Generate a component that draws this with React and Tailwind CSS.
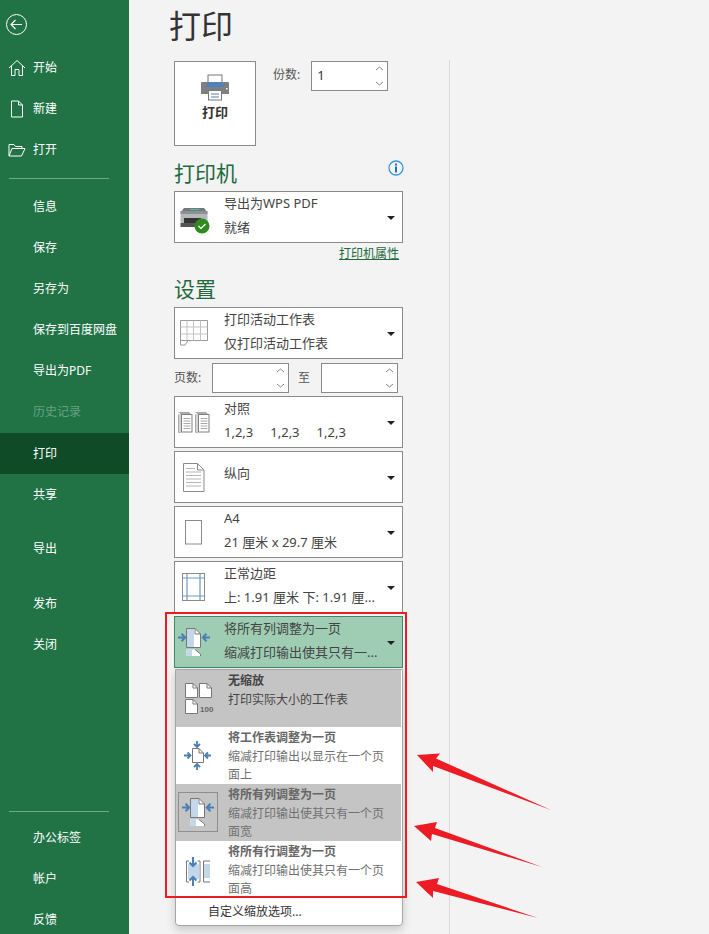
const FONT = "font-['Noto_Sans','Noto_Sans_CJK_SC',sans-serif]";

function SideItem({ children, icon, active, disabled, className = "" }) {
  return (
    <div
      className={`flex h-[41px] shrink-0 items-center text-[12px] ${
        active ? "bg-[#0e4b26] text-white" : disabled ? "text-[#66a182]" : "text-white"
      } ${className}`}
    >
      <span className="flex w-[33px] shrink-0 justify-center pl-[1px]">{icon}</span>
      <span>{children}</span>
    </div>
  );
}

function Caret() {
  return <span className="block h-0 w-0 border-x-[4px] border-t-[4px] border-x-transparent border-t-[#222]" />;
}

function Spinner() {
  return (
    <svg width="9" height="22" viewBox="0 0 9 22" fill="none" stroke="#777" strokeWidth="0.9">
      <path d="M1 5 L4.5 2 L8 5" />
      <path d="M1 17 L4.5 20 L8 17" />
    </svg>
  );
}

function Dropdown({ icon, line1, line2, selected, single }) {
  return (
    <div
      className={`flex h-[52px] w-[229px] shrink-0 border ${
        selected ? "border-[#3f8a60] bg-[#9fcdb3]" : "border-[#8a8a8a] bg-white"
      }`}
    >
      <div className="flex w-[49px] shrink-0 items-center pl-[2px]">{icon}</div>
      <div className={`min-w-0 flex-1 -mt-px text-[13px] leading-6 text-[#444] ${single ? "pt-[10px]" : ""}`}>
        <div className="whitespace-nowrap">{line1}</div>
        {line2 && <div className="whitespace-nowrap">{line2}</div>}
      </div>
      <div className="flex w-[15px] shrink-0 justify-start pt-[24px]">
        <Caret />
      </div>
    </div>
  );
}

const Svg34 = ({ children }) => (
  <svg width="34" height="34" viewBox="0 0 34 34" fill="none">{children}</svg>
);

const FitColPages = () => (
  <>
    <path d="M9.5 3.5 H18 L23.5 9 V22.5 H9.5 Z" fill="#fff" stroke="#777" />
    <path d="M10 4 H17 V22 H10 Z" fill="#c3d7ea" />
    <path d="M18 3.5 V9 H23.5" stroke="#777" />
    <path d="M9.5 24.5 H18 L23.5 29 V31 H9.5 Z" fill="#fff" />
    <path d="M9.5 24.5 H15 V31 H9.5 Z" fill="#c3d7ea" />
    <path d="M18 24.5 L23.5 29 V31" stroke="#777" />
    <path d="M1 12.5 H8 M4.5 8.8 L8.2 12.5 L4.5 16.2" stroke="#4a7fb5" strokeWidth="2" />
    <path d="M33 12.5 H26 M29.5 8.8 L25.8 12.5 L29.5 16.2" stroke="#4a7fb5" strokeWidth="2" />
  </>
);

const PrinterStatusIcon = () => (
  <Svg34>
    <path d="M7 8 H27 L30 12 H4 Z" fill="#6f7a7a" />
    <rect x="3.5" y="11" width="27" height="12" rx="1" fill="#b4b8b8" />
    <rect x="3.5" y="11" width="27" height="3" fill="#8b9090" />
    <rect x="13" y="9" width="9" height="1" fill="#49c0a8" />
    <rect x="7" y="18" width="17" height="7" fill="#333" />
    <rect x="3.5" y="23" width="20" height="4" fill="#555" />
    <circle cx="25" cy="26" r="7.5" fill="#2e8b1f" />
    <path d="M21.5 26 L24 28.5 L28.5 24" stroke="#fff" strokeWidth="1.2" />
  </Svg34>
);

const SheetIcon = () => (
  <Svg34>
    <path d="M3.5 4.5 H30.5 V24.5 H11 L8 29 H3.5 Z" fill="#fff" stroke="#9a9a9a" />
    <path d="M3.5 11 H30.5 M3.5 18 H30.5 M10 4.5 V24.5 M16.5 4.5 V24.5 M23.5 4.5 V24.5" stroke="#c3c3c3" />
    <path d="M3.5 24.5 H11" stroke="#9a9a9a" />
  </Svg34>
);

const CollateIcon = () => (
  <Svg34>
    {[1.5, 18.5].map((x) => (
      <g key={x}>
        <path d={`M${x} 9.5 V27.5 H${x + 2} M${x} 7.5 H${x + 11}`} stroke="#aaa" />
        <path d={`M${x + 1.5} 9 V27.5 M${x + 1.5} 8.5 H${x + 12}`} stroke="#aaa" />
        <rect x={x + 3} y={9.5} width="10.5" height="17.5" fill="#fff" stroke="#808080" />
        <path d={`M${x + 5} 13.5 H${x + 12} M${x + 5} 16 H${x + 12} M${x + 5} 18.5 H${x + 12} M${x + 5} 21 H${x + 12} M${x + 5} 23.5 H${x + 12}`} stroke="#aaa" />
      </g>
    ))}
  </Svg34>
);

const PortraitIcon = () => (
  <Svg34>
    <path d="M6.5 3.5 H20.5 L27 10 V31.5 H6.5 Z" fill="#fff" stroke="#8a8a8a" />
    <path d="M20.5 3.5 V10 H27" stroke="#8a8a8a" />
    <path d="M9 8.5 H18 M9 12 H24 M9 15.5 H24 M9 19 H24 M9 22.5 H24 M9 26 H24" stroke="#b5b5b5" />
  </Svg34>
);

const A4Icon = () => (
  <Svg34>
    <rect x="8.5" y="5.5" width="16" height="23.5" fill="#fff" stroke="#8a8a8a" />
  </Svg34>
);

const MarginIcon = () => (
  <Svg34>
    <rect x="5.5" y="3.5" width="22" height="27" fill="#fff" stroke="#8a8a8a" />
    <path d="M10 3.5 V30.5 M23 3.5 V30.5 M5.5 8 H27.5 M5.5 26 H27.5" stroke="#6f9ac4" strokeWidth="1.2" />
  </Svg34>
);

const FitColIcon = () => <Svg34><FitColPages /></Svg34>;

const MiniPage = ({ x, y }) => (
  <>
    <path d={`M${x + 0.5} ${y + 0.5} H${x + 8} L${x + 12.5} ${y + 5} V${y + 14.5} H${x + 0.5} Z`} fill="#fff" stroke="#777" />
    <path d={`M${x + 8} ${y + 0.5} V${y + 5} H${x + 12.5}`} stroke="#777" />
  </>
);

const NoScaleIcon = () => (
  <svg width="40" height="40" viewBox="0 0 40 40" fill="none">
    <MiniPage x={7} y={5} />
    <MiniPage x={21} y={5} />
    <MiniPage x={7} y={21} />
    <text x="22" y="34" fontSize="8" fontWeight="700" fill="#666" fontFamily="Liberation Sans, sans-serif">100</text>
  </svg>
);

const FitSheetIcon = () => (
  <svg width="40" height="40" viewBox="0 0 40 40" fill="none">
    <path d="M14.5 13.5 H21 L25.5 18 V27.5 H14.5 Z" fill="#fff" stroke="#777" />
    <path d="M21 13.5 V18 H25.5" stroke="#777" />
    <g stroke="#4a7fb5" strokeWidth="1.8">
      <path d="M6 20.5 H12.5 M9.5 17.5 L12.5 20.5 L9.5 23.5" />
      <path d="M33 20.5 H27 M30 17.5 L27 20.5 L30 23.5" />
      <path d="M19 6 V12 M16 9 L19 12 L22 9" />
      <path d="M19 35 V29 M16 32 L19 29 L22 32" />
    </g>
  </svg>
);

const FitColFlyIcon = () => (
  <div className="flex h-[40px] w-[40px] items-center justify-center border border-[#8e8e8e]">
    <Svg34><FitColPages /></Svg34>
  </div>
);

const FitRowIcon = () => (
  <svg width="40" height="40" viewBox="0 0 40 40" fill="none">
    <path d="M8.5 12 V33 M22 12 V33 M8.5 12 H11 M8.5 33 H11 M19.5 12 H22 M19.5 33 H22" stroke="#777" />
    <path d="M10 15 H20 L21.5 17 V30 H10 Z" fill="#c3d7ea" />
    <path d="M32 12 H25.5 V33 H32" fill="#fff" stroke="#777" />
    <path d="M26 15 H32 V29 H26 Z" fill="#c3d7ea" />
    <g stroke="#4a7fb5" strokeWidth="2">
      <path d="M15 8 V17 M11.5 13.5 L15 17 L18.5 13.5" />
      <path d="M15 37 V28 M11.5 31.5 L15 28 L18.5 31.5" />
    </g>
  </svg>
);

function FlyItem({ icon, title, desc, active, strong }) {
  return (
    <div className={`flex h-[57px] w-[225px] shrink-0 ${active ? "bg-[#c4c4c4]" : "bg-white"}`}>
      <div className="w-[52px] shrink-0 pl-[2px] pt-[8px]">{icon}</div>
      <div className={`min-w-0 flex-1 text-[12px] ${strong ? "text-[#444]" : "text-[#666]"}`}>
        <div className="h-[21px] pt-px font-bold leading-[20px]">{title}</div>
        <div className={`w-[160px] leading-[18px] ${strong ? "text-[#444]" : "text-[#707070]"}`}>{desc}</div>
      </div>
    </div>
  );
}

const HomeIcon = (
  <svg width="18" height="18" viewBox="0 0 18 18" fill="none" stroke="#fff">
    <path d="M1 9 L9 1.5 L17 9 M3.5 7 V16.5 H7 V10.5 H11 V16.5 H14.5 V7" />
  </svg>
);
const DocIcon = (
  <svg width="14" height="18" viewBox="0 0 14 18" fill="none" stroke="#fff">
    <path d="M1.5 1 H8.5 L12.5 5 V17 H1.5 Z M8.5 1 V5 H12.5" />
  </svg>
);
const FolderIcon = (
  <svg width="18" height="14" viewBox="0 0 18 14" fill="none" stroke="#fff">
    <path d="M1 13 V1.5 H6 L7.5 3.5 H14 V5.5 M1 13 L4 5.5 H17 L13.5 13 Z" />
  </svg>
);

export default function App() {
  return (
    <div className={`relative flex h-[934px] w-[709px] overflow-hidden bg-[#f3f3f3] ${FONT}`}>
      {/* Sidebar */}
      <aside className="flex h-[934px] w-[129px] shrink-0 flex-col bg-[#217346]">
        <div className="flex h-[47px] shrink-0 items-start pl-[6px] pt-[14px]">
          <svg width="21" height="21" viewBox="0 0 21 21" fill="none" stroke="#fff">
            <circle cx="10.5" cy="10.5" r="10" />
            <path d="M16 10.5 H5 M9.5 6 L5 10.5 L9.5 15" strokeWidth="1.1" />
          </svg>
        </div>
        <SideItem icon={HomeIcon}>开始</SideItem>
        <SideItem icon={DocIcon}>新建</SideItem>
        <SideItem icon={FolderIcon}>打开</SideItem>
        <div className="flex h-[16px] shrink-0 items-center pl-[9px]">
          <div className="h-px w-[100px] bg-[#6fa886]" />
        </div>
        <SideItem>信息</SideItem>
        <SideItem>保存</SideItem>
        <SideItem>另存为</SideItem>
        <SideItem>保存到百度网盘</SideItem>
        <SideItem>导出为PDF</SideItem>
        <SideItem disabled>历史记录</SideItem>
        <SideItem active className="mt-px">打印</SideItem>
        <SideItem>共享</SideItem>
        <SideItem className="mt-[13px]">导出</SideItem>
        <SideItem className="mt-[14px]">发布</SideItem>
        <SideItem>关闭</SideItem>
        <div className="ml-[9px] mt-[146px] h-px w-[100px] shrink-0 bg-[#6fa886]" />
        <SideItem className="mt-[5px]">办公标签</SideItem>
        <SideItem>帐户</SideItem>
        <SideItem>反馈</SideItem>
      </aside>

      {/* Print column */}
      <main className="ml-[45px] flex w-[229px] shrink-0 flex-col">
        <div className="-ml-[5px] h-[61px] shrink-0 text-[32px] leading-[51px] text-[#333]">打印</div>

        <div className="flex h-[85px] shrink-0">
          <div className="flex h-[85px] w-[82px] shrink-0 flex-col items-center border border-[#8a8a8a] bg-white pt-[12px]">
            <svg width="30" height="27" viewBox="0 0 30 27" fill="none">
              <path d="M2 8 H28 Q29 8 29 9 V20 H1 V9 Q1 8 2 8" fill="#7f7f7f" />
              <rect x="8" y="1" width="14" height="9" fill="#fff" stroke="#777" />
              <rect x="8" y="8" width="14" height="3" fill="#4f81bd" />
              <rect x="6" y="10" width="18" height="3" fill="#4f81bd" />
              <rect x="26" y="14" width="1.5" height="1.5" fill="#fff" />
              <rect x="8.5" y="16.5" width="13" height="9.5" fill="#fff" stroke="#777" />
              <path d="M11 20 H19 M11 23 H19" stroke="#4f81bd" />
            </svg>
            <span className="mt-[2px] text-[13px] font-bold leading-[18px] text-[#333]">打印</span>
          </div>
          <span className="ml-[17px] mt-[5px] text-[12px] leading-[18px] text-[#555]">份数:</span>
          <div className="ml-[11px] flex h-[30px] w-[77px] items-center justify-between border border-[#8a8a8a] bg-white pl-[5px] pr-[3px] text-[13px] text-[#333]">
            <span>1</span>
            <Spinner />
          </div>
        </div>

        <div className="mt-[10px] flex h-[35px] shrink-0 items-center justify-between">
          <span className="text-[21px] leading-none text-[#1f6b3e]">打印机</span>
          <svg className="mr-[-1px] mb-[11px]" width="16" height="16" viewBox="0 0 16 16" fill="none">
            <circle cx="8" cy="8" r="7" stroke="#3a96dd" strokeWidth="1.3" />
            <rect x="7" y="3.5" width="2" height="2" fill="#1b6fb5" />
            <rect x="7" y="6.5" width="2" height="6" fill="#1b6fb5" />
          </svg>
        </div>
        <Dropdown icon={<PrinterStatusIcon />} line1="导出为WPS PDF" line2="就绪" />
        <div className="flex h-[22px] shrink-0 items-center justify-end pr-[4px] text-[12px] text-[#1f6b3e] underline">
          打印机属性
        </div>

        <div className="mt-[8px] flex h-[34px] shrink-0 items-center pb-[2px] text-[21px] leading-none text-[#1f6b3e]">设置</div>
        <Dropdown icon={<SheetIcon />} line1="打印活动工作表" line2="仅打印活动工作表" />

        <div className="mt-[4px] flex h-[30px] shrink-0 items-center">
          <span className="w-[38px] shrink-0 text-[12px] text-[#555]">页数:</span>
          <div className="flex h-[30px] w-[77px] shrink-0 items-center justify-end border border-[#8a8a8a] bg-white pr-[3px]">
            <Spinner />
          </div>
          <span className="ml-[9px] w-[23px] shrink-0 text-[12px] text-[#555]">至</span>
          <div className="flex h-[30px] w-[77px] shrink-0 items-center justify-end border border-[#8a8a8a] bg-white pr-[3px]">
            <Spinner />
          </div>
        </div>

        <div className="mt-[3px] flex flex-col gap-[3px]">
          <Dropdown
            icon={<CollateIcon />}
            line1="对照"
            line2={
              <span className="flex gap-[17px]">
                <span>1,2,3</span>
                <span>1,2,3</span>
                <span>1,2,3</span>
              </span>
            }
          />
          <Dropdown icon={<PortraitIcon />} line1="纵向" single />
          <Dropdown icon={<A4Icon />} line1="A4" line2="21 厘米 x 29.7 厘米" />
          <Dropdown icon={<MarginIcon />} line1="正常边距" line2="上: 1.91 厘米 下: 1.91 厘..." />
          <Dropdown icon={<FitColIcon />} line1="将所有列调整为一页" line2="缩减打印输出使其只有一..." selected />
        </div>

        {/* Flyout menu */}
        <div className="ml-px mt-px flex h-[257px] w-[228px] shrink-0 flex-col rounded-b-[4px] border border-[#a6a6a6] bg-white shadow-[0_4px_10px_rgba(0,0,0,0.18)]">
          <FlyItem icon={<NoScaleIcon />} title="无缩放" desc="打印实际大小的工作表" active strong />
          <FlyItem icon={<FitSheetIcon />} title="将工作表调整为一页" desc="缩减打印输出以显示在一个页面上" />
          <FlyItem icon={<FitColFlyIcon />} title="将所有列调整为一页" desc="缩减打印输出使其只有一个页面宽" active />
          <FlyItem icon={<FitRowIcon />} title="将所有行调整为一页" desc="缩减打印输出使其只有一个页面高" />
          <div className="flex h-[26px] shrink-0 items-center pl-[32px] pt-[2px] text-[12px] text-[#333]">自定义缩放选项...</div>
        </div>
      </main>

      <div className="ml-[46px] mt-[60px] w-px shrink-0 self-stretch bg-[#d9d9d9]" />

      {/* Annotations */}
      <div className="absolute left-[165px] top-[612px] h-[286px] w-[242px] border-2 border-[#ed1c24]" />
      <svg className="absolute left-0 top-0" width="709" height="934" viewBox="0 0 709 934" fill="#ed1c24">
        <polygon points="417,755 440,753.5 436,758.5 551,810 433,766 433,772" />
        <polygon points="414,826 437,822 435,828 542,867 432,834 431,841" />
        <polygon points="416,882 439,878 437,884 538,918 433,891 433,898" />
      </svg>
    </div>
  );
}
